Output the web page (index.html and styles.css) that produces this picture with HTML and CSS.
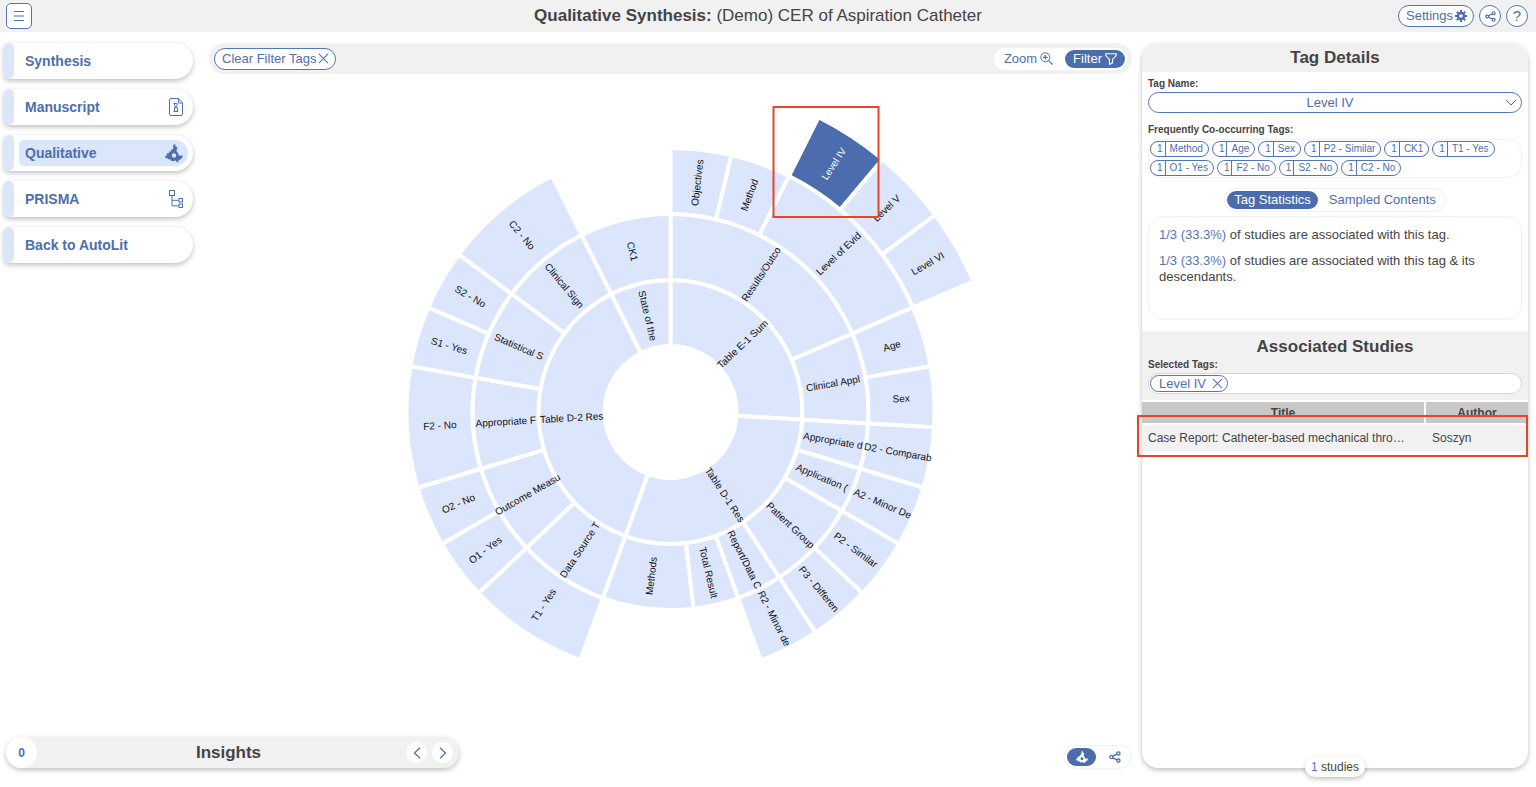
FILE: index.html
```html
<!DOCTYPE html>
<html lang="en">
<head>
<meta charset="utf-8">
<title>Qualitative Synthesis</title>
<link rel="stylesheet" href="styles.css">
</head>
<body>
<svg class="sprite" aria-hidden="true">
  <symbol id="i-burst" viewBox="0 0 18 18">
    <path fill-rule="evenodd" d="M8.300 .5h2.200v2.300h1.700v2.600h-.8l.4 2.400a4.500 4.500 0 0 1 1.900 3.600h4.100l-.6 2.800-1.300 .2-.6 1.600-1.700-.2.100 1.900-2.300.300-.5-1.700-1.400.7a6 6 0 0 1-3.700-.6l-.9-1.400-1.500.6-1.200-1.700-1.800.3L.2 12l1.900-.8-.3-1.900 2.300-.1L3.900 7.600l2.200-.2.200-1.800 1.800-.3zM9 9.300a2.200 2.200 0 1 0 0 4.400a2.200 2.200 0 1 0 0-4.400z"/>
  </symbol>
  <symbol id="i-share" viewBox="0 0 12 12">
    <g fill="none" stroke="currentColor" stroke-width="1.3"><circle cx="2.4" cy="6" r="1.6"/><circle cx="9.4" cy="2.4" r="1.6"/><circle cx="9.4" cy="9.6" r="1.6"/><path d="M3.8 5.2 8 3.2M3.8 6.8 8 8.8"/></g>
  </symbol>
  <symbol id="i-x" viewBox="0 0 12 12"><path d="M1 1l10 10M11 1L1 11" fill="none" stroke="currentColor" stroke-width="1.1"/></symbol>
</svg>

<header class="topbar">
  <button class="menu-btn" aria-label="Menu"><svg width="12" height="12" viewBox="0 0 12 12"><path d="M1 1.5h10M1 6h10M1 10.500h10" stroke="currentColor" fill="none" stroke-width="1"/></svg></button>
  <h1 class="page-title">Qualitative Synthesis: <span>(Demo) CER of Aspiration Catheter</span></h1>
  <div class="top-actions">
    <button class="pill">Settings <svg width="12" height="12" viewBox="0 0 12 12"><circle cx="6" cy="6" r="3" fill="none" stroke="currentColor" stroke-width="2.400"/><path d="M6 0v2M6 10v2M0 6h2M10 6h2M1.800 1.800l1.400 1.400M8.800 8.800l1.400 1.400M10.200 1.800 8.800 3.200M3.200 8.800 1.800 10.200" stroke="currentColor" stroke-width="2"/></svg></button>
    <button class="round-btn" aria-label="Share"><svg width="11" height="11"><use href="#i-share"/></svg></button>
    <button class="round-btn" aria-label="Help">?</button>
  </div>
</header>

<div class="layout">
  <div class="workspace">
    <div class="upper">
      <nav class="sidebar">
        <a class="nav-item" href="#"><span class="nav-body">Synthesis</span></a>
        <a class="nav-item" href="#"><span class="nav-body">Manuscript
          <svg width="14" height="18" viewBox="0 0 14 18"><g fill="none" stroke="currentColor"><path d="M2 .5h7.500L13.500 5v11a1.500 1.500 0 0 1-1.500 1.500H2A1.500 1.500 0 0 1 .5 16V2A1.500 1.500 0 0 1 2 .5zM9.500 .5V5h4"/><path d="M4.500 5.500h3.500M8 5.500v2L5.500 10v3.500M5.500 5.500v2L8.500 10v3.500M4.500 13.500h4.500M5.500 9.500h3"/></g></svg></span></a>
        <a class="nav-item" href="#"><span class="nav-body active">Qualitative
          <svg width="18" height="18"><use href="#i-burst"/></svg></span></a>
        <a class="nav-item" href="#"><span class="nav-body">PRISMA
          <svg width="14" height="18" viewBox="0 0 14 18"><g fill="none" stroke="currentColor"><rect x=".5" y=".5" width="5" height="5"/><rect x="10" y="8.500" width="3.500" height="3.500"/><rect x="10" y="14" width="3.500" height="3.500"/><path d="M3 5.500v10.300h7M3 10.300h7"/></g></svg></span></a>
        <a class="nav-item" href="#"><span class="nav-body">Back to AutoLit</span></a>
      </nav>
      <main class="main">
        <div class="toolbar">
          <button class="pill">Clear Filter Tags <svg width="11" height="11"><use href="#i-x"/></svg></button>
          <div class="toggle">
            <button class="toggle-btn">Zoom <svg width="13" height="13" viewBox="0 0 13 13"><g fill="none" stroke="currentColor"><circle cx="5.300" cy="5.300" r="4.500"/><path d="M8.600 8.600l3.900 3.900M5.300 3v4.600M3 5.300h4.600" stroke-width="1.200"/></g></svg></button>
            <button class="toggle-btn on">Filter <svg width="12" height="12" viewBox="0 0 12 12"><path d="M.8 .8h10.400v1.800L7.500 6.500v3.300l-3 1.600V6.500L.8 2.600z" fill="none" stroke="currentColor" stroke-width="1.100"/></svg></button>
          </div>
        </div>
        <svg class="chart" id="chart" viewBox="-310 -308 620 564" role="img" aria-label="Tag hierarchy"></svg>
      </main>
    </div>
    <div class="lower">
      <section class="insights">
        <span class="count">0</span>
        <h2>Insights</h2>
        <button class="step" aria-label="Previous"><svg width="8" height="12" viewBox="0 0 8 12"><path d="M7 .8 1.500 6 7 11.200" fill="none" stroke="currentColor" stroke-width="1.200"/></svg></button>
        <button class="step" aria-label="Next"><svg width="8" height="12" viewBox="0 0 8 12"><path d="M1 .8 6.500 6 1 11.200" fill="none" stroke="currentColor" stroke-width="1.200"/></svg></button>
      </section>
      <div class="toggle outlined views">
        <button class="toggle-btn on" aria-label="Sunburst view"><svg width="12" height="12"><use href="#i-burst"/></svg></button>
        <button class="toggle-btn" aria-label="Graph view"><svg width="12" height="12"><use href="#i-share"/></svg></button>
      </div>
    </div>
  </div>

  <aside class="panel">
    <h2 class="panel-title">Tag Details</h2>
    <div class="details">
      <label class="field-label" for="tag">Tag Name:</label>
      <div class="select-wrap">
        <select id="tag"><option>Level IV</option></select>
        <svg width="12" height="7" viewBox="0 0 12 7"><path d="M.8 .8 6 6 11.200 .8" fill="none" stroke="currentColor"/></svg>
      </div>
      <h3 class="field-label">Frequently Co-occurring Tags:</h3>
      <div class="tag-box">
        <button class="tag"><b>1</b><span>Method</span></button>
        <button class="tag"><b>1</b><span>Age</span></button>
        <button class="tag"><b>1</b><span>Sex</span></button>
        <button class="tag"><b>1</b><span>P2 - Similar</span></button>
        <button class="tag"><b>1</b><span>CK1</span></button>
        <button class="tag"><b>1</b><span>T1 - Yes</span></button>
        <button class="tag"><b>1</b><span>O1 - Yes</span></button>
        <button class="tag"><b>1</b><span>F2 - No</span></button>
        <button class="tag"><b>1</b><span>S2 - No</span></button>
        <button class="tag"><b>1</b><span>C2 - No</span></button>
      </div>
      <div class="toggle outlined tabs">
        <button class="toggle-btn on">Tag Statistics</button>
        <button class="toggle-btn">Sampled Contents</button>
      </div>
      <div class="stats">
        <p><em>1/3 (33.3%)</em> of studies are associated with this tag.</p>
        <p><em>1/3 (33.3%)</em> of studies are associated with this tag &amp; its descendants.</p>
      </div>
    </div>
    <div class="studies-head">
      <h2>Associated Studies</h2>
      <label class="field-label" for="selected">Selected Tags:</label>
      <div class="tag-input">
        <button class="chosen">Level IV <svg width="11" height="11"><use href="#i-x"/></svg></button>
        <input id="selected" type="text">
      </div>
    </div>
    <div class="studies">
      <div class="table-wrap">
        <table>
          <thead><tr><th>Title</th><th class="col-author">Author</th></tr></thead>
          <tbody><tr><td>Case Report: Catheter-based mechanical thro…</td><td>Soszyn</td></tr></tbody>
        </table>
      </div>
      <div class="callout"></div>
    </div>
    <div class="total"><em>1</em> studies</div>
  </aside>
</div>
<script src="chart.js"></script>
</body>
</html>
```
FILE: styles.css
```css
* { box-sizing: border-box; }
body {
  margin: 0;
  min-height: 100vh;
  display: flex;
  flex-direction: column;
  background: #fff;
  color: #444;
  font: 12px/16px "Liberation Sans", Arial, sans-serif;
}
h1, h2, h3, p { margin: 0; }
em { font-style: normal; color: #5575b9; }
button, input, select { font: inherit; color: #4d6eb0; margin: 0; }
button { cursor: pointer; padding: 0; border: 0; background: none; white-space: nowrap; }
.sprite { position: absolute; width: 0; height: 0; }
svg { fill: currentColor; flex: none; }

.topbar {
  height: 32px;
  padding: 0 8px 0 6px;
  background: #f1f1f1;
  display: grid;
  grid-template-columns: 1fr auto 1fr;
  align-items: center;
}
.menu-btn {
  width: 26px;
  height: 26px;
  border: 1px solid #5575b9;
  border-radius: 5px;
  background: #fff;
  display: grid;
  place-items: center;
}
.page-title { font-size: 17px; line-height: 20px; padding-right: 18px; }
.page-title span { font-weight: normal; }
.top-actions { display: flex; gap: 5px; justify-content: flex-end; }
.pill, .round-btn {
  height: 22px;
  border: 1px solid #5575b9;
  border-radius: 11px;
  background: #fff;
  font-size: 13px;
  display: flex;
  align-items: center;
  justify-content: center;
  gap: 2px;
}
.pill { padding: 0 6px 0 7px; }
.round-btn { width: 22px; font-size: 15px; }

.layout {
  flex: 1;
  display: grid;
  grid-template-columns: minmax(0, 1fr) 386px;
  gap: 10px;
  padding: 11px 8px 19px 4px;
}
.workspace, .main { display: flex; flex-direction: column; }
.upper { flex: 1; display: flex; gap: 16px; }
.sidebar { width: 189px; display: flex; flex-direction: column; gap: 10px; }
.nav-item {
  height: 36px;
  padding-right: 5px;
  border-radius: 5px 18px 18px 5px;
  background: #fff;
  box-shadow: 0 2px 5px rgba(0, 0, 0, .25);
  color: #4d6eb0;
  font-size: 14px;
  font-weight: bold;
  text-decoration: none;
  display: flex;
  align-items: center;
  gap: 5px;
}
.nav-item::before {
  content: "";
  width: 10px;
  height: 36px;
  border-radius: 5px;
  background: #dbe5fc;
}
.nav-body {
  flex: 1;
  height: 26px;
  padding: 0 5px 0 6px;
  border-radius: 5px 13px 13px 5px;
  display: flex;
  align-items: center;
  justify-content: space-between;
}
.nav-body.active { background: #dbe5fc; }

.main { flex: 1; }
.toolbar {
  height: 31px;
  padding: 0 5px;
  border-radius: 16px;
  background: #f1f1f1;
  display: flex;
  align-items: center;
  justify-content: space-between;
}
.toggle {
  padding: 2px;
  border-radius: 12px;
  background: #fff;
  display: flex;
  gap: 4px;
}
.toggle.outlined { border: 1px solid #f1f1f1; }
.toggle-btn {
  height: 18px;
  padding: 0 8px;
  border-radius: 9px;
  font-size: 13px;
  line-height: 18px;
  display: flex;
  align-items: center;
  gap: 3px;
}
.toggle-btn.on { background: #4b6dad; color: #fff; }
.chart { width: 100%; height: 564px; margin-top: 30px; font-size: 10px; }
.arc { fill: #dbe5fc; stroke: #fff; stroke-width: 4px; }
.arc.picked { fill: #4b6dad; }
.arc-label { fill: #111; text-anchor: middle; }
.arc-label.picked { fill: #fff; }
.mark { fill: none; stroke: #e8442a; stroke-width: 2px; }

.lower { height: 31px; display: flex; justify-content: space-between; align-items: flex-start; padding-left: 2px; }
.insights {
  width: 453px;
  height: 31px;
  padding-right: 6px;
  border-radius: 16px;
  background: #f1f1f1;
  box-shadow: 0 2px 5px rgba(0, 0, 0, .25);
  display: flex;
  align-items: center;
  gap: 5px;
}
.insights h2 { flex: 1; text-align: center; font-size: 17px; line-height: 20px; padding-left: 14px; }
.count {
  width: 31px;
  height: 31px;
  border-radius: 50%;
  background: #fff;
  color: #4d6eb0;
  font-weight: bold;
  display: grid;
  place-items: center;
}
.step {
  width: 21px;
  height: 21px;
  border-radius: 50%;
  background: #fff;
  display: grid;
  place-items: center;
}
.views { margin-top: 8px; }
.views .toggle-btn { width: 29px; justify-content: center; }

.panel {
  position: relative;
  border-radius: 16px;
  background: #fff;
  box-shadow: 0 2px 5px rgba(0, 0, 0, .25);
  display: flex;
  flex-direction: column;
}
.panel-title {
  height: 29px;
  border-radius: 16px 16px 0 0;
  background: #f1f1f1;
  text-align: center;
  font-size: 17px;
  line-height: 29px;
}
.details { padding: 6px 6px 11px; display: flex; flex-direction: column; }
.field-label { font-size: 10px; line-height: 12px; font-weight: bold; }
.select-wrap { position: relative; margin: 2px 0 11px; color: #4d6eb0; }
.select-wrap select {
  display: block;
  width: 100%;
  height: 21px;
  padding: 0 20px 0 10px;
  border: 1px solid #5575b9;
  border-radius: 11px;
  background: #fff;
  appearance: none;
  text-align-last: center;
  font-size: 13px;
}
.select-wrap svg { position: absolute; right: 5px; top: 7px; pointer-events: none; }
.tag-box {
  margin: 3px 0 10px;
  padding: 1px;
  border: 1px solid #f1f1f1;
  border-radius: 14px;
  display: flex;
  flex-wrap: wrap;
  gap: 3px;
}
.tag {
  height: 16px;
  border: 1px solid #5575b9;
  border-radius: 8px;
  font-size: 10px;
  line-height: 14px;
  display: flex;
}
.tag b { font-weight: normal; padding: 0 2px 0 6px; border-right: 1px solid #5575b9; }
.tag span { padding: 0 5px 0 4px; }
.tabs { align-self: center; }
.tabs .toggle-btn { padding: 0 7px; }
.stats {
  min-height: 104px;
  margin-top: 4px;
  padding: 10px;
  border: 1px solid #f1f1f1;
  border-radius: 16px;
  font-size: 13px;
  display: flex;
  flex-direction: column;
  gap: 10px;
}
.studies-head { padding: 6px 6px 6px; background: #f1f1f1; }
.studies-head h2 { text-align: center; font-size: 17px; line-height: 20px; margin-bottom: 2px; }
.studies-head .field-label { display: block; }
.tag-input {
  height: 21px;
  margin-top: 2px;
  padding: 0 1px;
  border: 1px solid #d6d6d6;
  border-radius: 11px;
  background: #fff;
  display: flex;
  align-items: center;
}
.tag-input input { flex: 1; min-width: 0; border: 0; background: none; outline: 0; }
.chosen {
  height: 17px;
  padding: 0 4px 0 8px;
  border: 1px solid #5575b9;
  border-radius: 9px;
  font-size: 13px;
  line-height: 15px;
  display: flex;
  align-items: center;
  gap: 6px;
}
.studies { position: relative; flex: 1; }
.table-wrap { overflow: hidden; }
table {
  width: calc(100% + 4px);
  margin: 0 -2px;
  border-spacing: 2px;
  table-layout: fixed;
}
th { height: 21px; padding: 0; background: #c8c8c8; font-size: 12px; }
.col-author { width: 102px; }
td {
  height: 26px;
  padding: 0 6px;
  background: #f1f1f1;
  overflow: hidden;
  text-overflow: ellipsis;
  white-space: nowrap;
}
tbody td + td { box-shadow: -2px 0 #f1f1f1; }
.callout {
  position: absolute;
  top: 15px;
  left: -5px;
  right: 0;
  height: 42px;
  border: 2px solid #e8442a;
}
.total {
  align-self: center;
  margin-bottom: -9px;
  padding: 2px 6px;
  border-radius: 10px;
  background: #fff;
  box-shadow: 0 2px 5px rgba(0, 0, 0, .25);
}
```
FILE: chart.js
```javascript
const RING = 66;

// Each node is [label, weight, children].
const tree = [
  ["Table E-1 Sum", 7, [
    ["Results/Outco", 5, [
      ["Objectives", 1],
      ["Method", 1],
      ["Level of Evid", 3, [["Level IV", 1], ["Level V", 1], ["Level VI", 1]]],
    ]],
    ["Clinical Appl", 2, [["Age", 1], ["Sex", 1]]],
  ]],
  ["Table D-1 Res", 8, [
    ["Appropriate d", 1, [["D2 - Comparab", 1]]],
    ["Application (", 1, [["A2 - Minor De", 1]]],
    ["Patient Group", 2, [["P2 - Similar", 1], ["P3 - Differen", 1]]],
    ["Report/Data C", 1, [["R2 - Minor de", 1]]],
    ["Total Result", 1],
    ["Methods", 2],
  ]],
  ["Table D-2 Res", 10, [
    ["Data Source T", 2, [["T1 - Yes", 2]]],
    ["Outcome Measu", 2, [["O1 - Yes", 1], ["O2 - No", 1]]],
    ["Appropriate F", 2, [["F2 - No", 2]]],
    ["Statistical S", 2, [["S1 - Yes", 1], ["S2 - No", 1]]],
    ["Clinical Sign", 2, [["C2 - No", 2]]],
  ]],
  ["State of the", 2, [["CK1", 2]]],
];
const picked = "Level IV";
const total = tree.reduce((sum, node) => sum + node[1], 0);
const chart = document.getElementById("chart");

function add(tag, attrs, text) {
  const el = document.createElementNS("http://www.w3.org/2000/svg", tag);
  for (const key in attrs) el.setAttribute(key, attrs[key]);
  if (text) el.textContent = text;
  chart.appendChild(el);
}

function point(r, turn) {
  const a = turn * 2 * Math.PI;
  return (r * Math.sin(a)).toFixed(2) + " " + (-r * Math.cos(a)).toFixed(2);
}

const labels = [];
function draw(nodes, start, depth) {
  for (const [name, weight, children] of nodes) {
    const from = start / total;
    const to = (start + weight) / total;
    const r0 = depth * RING;
    const r1 = r0 + RING;
    const big = to - from > 0.5 ? 1 : 0;
    const state = name === picked ? " picked" : "";
    add("path", {
      class: "arc" + state,
      d: `M${point(r0, from)}L${point(r1, from)}A${r1} ${r1} 0 ${big} 1 ${point(r1, to)}` +
         `L${point(r0, to)}A${r0} ${r0} 0 ${big} 0 ${point(r0, from)}Z`,
    });
    const angle = (from + to) * 180;
    labels.push([name, state, angle, (r0 + r1) / 2]);
    if (children) draw(children, start, depth + 1);
    start += weight;
  }
}
draw(tree, 0, 1);

for (const [name, state, angle, r] of labels) {
  add("text", {
    class: "arc-label" + state,
    dy: "0.35em",
    transform: `rotate(${angle - 90}) translate(${r},0) rotate(${angle < 180 ? 0 : 180})`,
  }, name);
}
add("rect", { class: "mark", x: 103, y: -305, width: 105, height: 110 });
```
